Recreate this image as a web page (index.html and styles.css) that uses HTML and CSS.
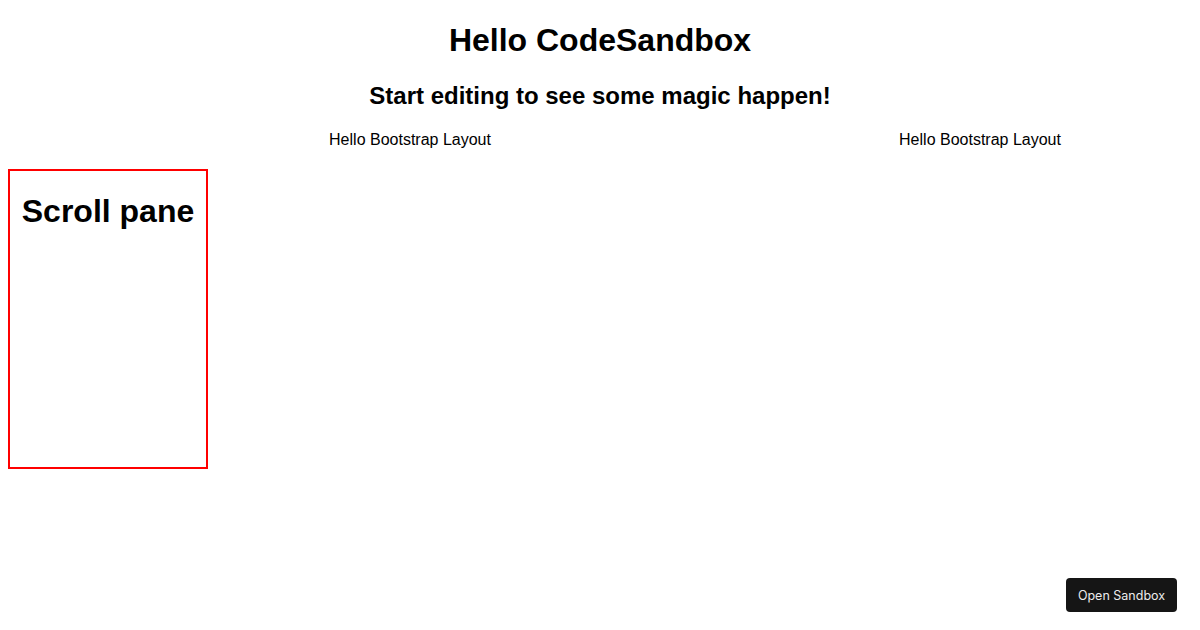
FILE: index.html
```html
<!DOCTYPE html>
<html lang="en">
<head>
<meta charset="utf-8">
<title>Hello CodeSandbox</title>
<link rel="stylesheet" href="styles.css">
</head>
<body>
<div class="app">
  <h1 class="title">Hello CodeSandbox</h1>
  <h2 class="subtitle">Start editing to see some magic happen!</h2>
  <div class="row">
    <div class="col">Hello Bootstrap Layout</div>
    <div class="col col-right">Hello Bootstrap Layout</div>
  </div>
  <div class="scroll-pane">
    <h1 class="pane-title">Scroll pane</h1>
  </div>
</div>
<a class="open-sandbox" href="#">Open Sandbox</a>
</body>
</html>
```

FILE: styles.css
```css
html, body {
  margin: 0;
  padding: 0;
  background: #fff;
}

body {
  font-family: "Liberation Sans", Arial, sans-serif;
  color: #000;
  padding: 0 8px;
}

.app {
  display: flex;
  flex-direction: column;
}

.title {
  font-size: 32px;
  line-height: 37px;
  font-weight: bold;
  text-align: center;
  margin: 22px 0 0;
}

.subtitle {
  font-size: 24px;
  line-height: 28px;
  font-weight: bold;
  text-align: center;
  margin: 23px 0 0;
}

.row {
  display: grid;
  grid-template-columns: 570px 1fr;
  margin: 21px 0 0 117px;
}

.col {
  font-size: 16px;
  line-height: 18px;
  text-align: center;
  min-width: 0;
}

.col-right {
  padding-left: 73px;
}

.scroll-pane {
  box-sizing: border-box;
  width: 200px;
  height: 300px;
  border: 2px solid #ff0000;
  margin-top: 20px;
  overflow: auto;
}

.pane-title {
  font-size: 32px;
  line-height: 37px;
  font-weight: bold;
  text-align: center;
  margin: 22px 0 0;
}

.open-sandbox {
  position: fixed;
  right: 23px;
  bottom: 18px;
  width: 111px;
  height: 34px;
  box-sizing: border-box;
  display: flex;
  align-items: center;
  justify-content: center;
  background: #151515;
  color: #ececec;
  border-radius: 4px;
  font-family: Inter, "Liberation Sans", sans-serif;
  font-size: 12.5px;
  text-decoration: none;
}
```
